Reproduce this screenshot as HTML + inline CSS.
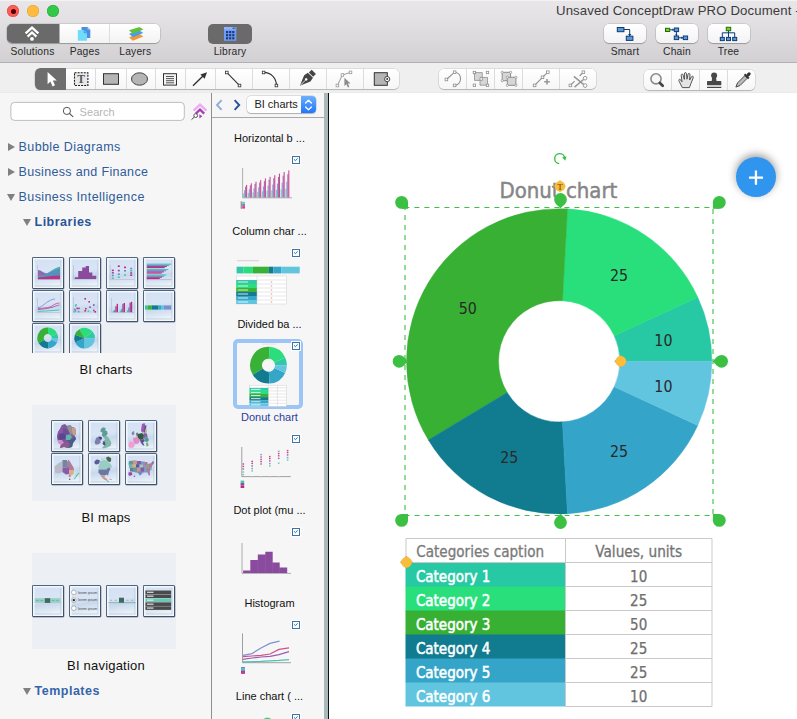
<!DOCTYPE html>
<html lang="en">
<head>
<meta charset="utf-8">
<title>Unsaved ConceptDraw PRO Document</title>
<style>
*{box-sizing:border-box;margin:0;padding:0}
html,body{width:797px;height:719px;overflow:hidden;background:#fff;font-family:"Liberation Sans",sans-serif;}
.abs{position:absolute}
#titlebar{position:absolute;left:0;top:0;width:797px;height:63px;background:linear-gradient(#e8e6e8 0%,#e3e1e3 30%,#d2d0d2 100%);border-bottom:1px solid #b2b0b2;box-shadow:inset 0 1px 0 #f4f3f4}
.tl{position:absolute;top:5px;width:12px;height:12px;border-radius:50%}
#win-title{position:absolute;left:556px;top:3px;font-size:13.2px;color:#3b3b3b;white-space:nowrap;letter-spacing:0.12px}
.tbtn{position:absolute;top:24.3px;height:19px;background:linear-gradient(#fff,#f3f3f3);border-radius:5px;box-shadow:0 0 0 0.5px rgba(0,0,0,.18),0 1px 1px rgba(0,0,0,.22)}
.tlabel{position:absolute;top:45.6px;font-size:10.3px;letter-spacing:.18px;color:#2a2a2a;text-align:center;white-space:nowrap;transform:translateX(-50%)}
#tools{position:absolute;left:0;top:63px;width:797px;height:30px;background:#efefef;border-bottom:1px solid #eaeaea}
.seg{position:absolute;top:5px;height:22px;background:linear-gradient(#fff,#f6f6f6);border-radius:5px;box-shadow:0 0 0 0.5px rgba(0,0,0,.16),0 1px 1px rgba(0,0,0,.18);overflow:hidden}
.seg i{position:absolute;top:0;width:1px;height:22px;background:#dcdcdc}
.seg svg{position:absolute;top:0;left:0}
#left{position:absolute;left:0;top:93px;width:211px;height:626px;background:#f6f6f6}
#leftborder{position:absolute;left:211px;top:93px;width:1px;height:626px;background:#8e8e8e}
#mid{position:absolute;left:212px;top:93px;width:112px;height:626px;background:#f6f6f6}
#split{position:absolute;left:324px;top:93px;width:4px;height:626px;background:#a9b8b8}
#splitline{position:absolute;left:328px;top:93px;width:1px;height:626px;background:#111}
#canvas{position:absolute;left:329px;top:93px;width:468px;height:626px;background:#fff;overflow:hidden}
.tree{position:absolute;font-size:12.5px;color:#2f5b99;white-space:nowrap;line-height:16px;letter-spacing:0.42px}
.tree.b{font-weight:bold;color:#2a559a;letter-spacing:0.5px}
.tri-r{position:absolute;width:0;height:0;border-left:7.5px solid #808080;border-top:4.7px solid transparent;border-bottom:4.7px solid transparent}
.tri-d{position:absolute;width:0;height:0;border-top:7.5px solid #808080;border-left:4.5px solid transparent;border-right:4.5px solid transparent}
.libbox{position:absolute;left:32px;width:144px;height:96px;background:#eceff4;overflow:hidden}
.liblabel{position:absolute;left:32px;width:148px;text-align:center;font-size:13px;color:#111;white-space:nowrap;line-height:16px;letter-spacing:0.2px}
.tile{position:absolute;width:32px;height:32px;border:1px solid #42546e;border-color:#52657f #3f516b #3f516b #52657f;border-radius:1.5px;background:linear-gradient(172deg,#d2e0f4 0%,#d9e5f5 42%,#c8d8ec 58%,#dde8f5 78%,#fbfdff 100%);box-shadow:inset 0 0 0 1.6px #f2f7fc,inset -2.4px -2.4px 0 0 rgba(120,140,170,.35),.4px .4px 0 rgba(66,84,110,.6);overflow:hidden}
.tile svg{position:absolute;left:-1px;top:-1px}
.mlabel{position:absolute;left:213px;width:113px;text-align:center;font-size:11px;color:#111;white-space:nowrap;line-height:14px;letter-spacing:0}
.chk{position:absolute;left:292px;width:8px;height:8px;border:1px solid #3f73a3;background:#fdfdfd;box-shadow:0 0 0 1px rgba(255,255,255,.9)}
.thumb{position:absolute}
.ctext{font-family:"DejaVu Sans Condensed","DejaVu Sans","Liberation Sans",sans-serif}
</style>
</head>
<body>
<div id="titlebar">
  <div class="tl" style="left:7px;background:#fc5b57;box-shadow:inset 0 0 0 .5px #df4744"></div>
  <div class="abs" style="left:10.5px;top:8.5px;width:5px;height:5px;border-radius:50%;background:#4c0102"></div>
  <div class="tl" style="left:27px;background:#fdbc40;box-shadow:inset 0 0 0 .5px #de9f34"></div>
  <div class="tl" style="left:47px;background:#34c84a;box-shadow:inset 0 0 0 .5px #27aa35"></div>

  <!-- segmented: Solutions / Pages / Layers -->
  <div class="tbtn" style="left:7px;width:153px;overflow:hidden">
    <div class="abs" style="left:0;top:0;width:52px;height:20px;background:#6a6a6a;box-shadow:0 0 0 .5px #6a6a6a"></div>
    <div class="abs" style="left:102px;top:0;width:1px;height:20px;background:#dedede"></div>
  </div>
  <div class="tbtn" style="left:208px;width:44px;background:#6a6a6a;box-shadow:none;top:24px;height:19.7px"></div>
  <div class="tbtn" style="left:604px;width:42px"></div>
  <div class="tbtn" style="left:656px;width:42px"></div>
  <div class="tbtn" style="left:708px;width:42px"></div>
  <svg class="abs" style="left:0;top:0" width="797" height="62" viewBox="0 0 797 62">
    <!-- solutions icon -->
    <g fill="none" stroke="#fff" stroke-width="2.2" stroke-linejoin="miter">
      <path d="M25.6 33.4 L32 27.6 L38.4 33.4"/>
      <path d="M27.6 36.6 L32 32.4 L36.4 36.6"/>
    </g>
    <circle cx="32" cy="38.9" r="1.9" fill="#fff"/>
    <!-- pages icon -->
    <path d="M81.5 27 H87.5 L90.3 29.8 V38 H81.5 Z" fill="#4a8fe0"/>
    <path d="M87.5 27 V29.8 H90.3 Z" fill="#9cc6f5"/>
    <path d="M77.8 30 H84.2 L87 32.8 V40.8 H77.8 Z" fill="#6fdcfb"/>
    <path d="M84.2 30 V32.8 H87" fill="none" stroke="#3f86d8" stroke-width="0.8"/>
    <!-- layers icon -->
    <path d="M129 37.2 L139.5 34 L143.3 36.4 L132.8 40.7 Z" fill="#f8952c"/>
    <path d="M129 33.8 L139.5 30.6 L143.3 33 L132.8 37.3 Z" fill="#4a9cf2"/>
    <path d="M129 30.2 L139.5 27 L143.3 29.6 L132.8 33.9 Z" fill="#62c13a"/>
    <!-- library icon -->
    <rect x="224" y="27" width="12.3" height="13.8" fill="#6f9cf6"/>
    <rect x="224" y="27" width="12.3" height="2.6" fill="#8fb4fb"/>
    <g fill="#1f3a77">
      <rect x="232.6" y="27.6" width="1.2" height="1.2"/><rect x="234.4" y="27.6" width="1.2" height="1.2"/>
      <rect x="226" y="31" width="2.2" height="2.2"/><rect x="229.1" y="31" width="2.2" height="2.2"/><rect x="232.2" y="31" width="2.2" height="2.2"/>
      <rect x="226" y="34.1" width="2.2" height="2.2"/><rect x="229.1" y="34.1" width="2.2" height="2.2"/><rect x="232.2" y="34.1" width="2.2" height="2.2"/>
      <rect x="226" y="37.2" width="2.2" height="2.2"/><rect x="229.1" y="37.2" width="2.2" height="2.2"/><rect x="232.2" y="37.2" width="2.2" height="2.2"/>
    </g>
    <!-- smart icon -->
    <g stroke="#0e3a78" stroke-width="1" fill="#5b9bd5">
      <path d="M624 29.5 H629.7 V36" fill="none"/>
      <rect x="617.3" y="27.5" width="6.6" height="4.2"/>
      <rect x="626.3" y="36.2" width="6.6" height="4.2"/>
    </g>
    <path d="M628 34 L629.7 36.2 L631.4 34 Z" fill="#0e3a78"/>
    <!-- chain icon -->
    <g stroke="#0e3a78" stroke-width="1" fill="#5b9bd5">
      <path d="M670 29.8 H674 M676.4 31.5 V36 M679 37.8 H683" fill="none"/>
      <rect x="665.5" y="28.3" width="4.2" height="3.2" fill="#79d321" stroke="#1e6b0f"/>
      <rect x="674.3" y="28.0" width="4.3" height="3.6"/>
      <rect x="674.3" y="36.0" width="4.3" height="3.6"/>
      <rect x="683.3" y="36.0" width="4.3" height="3.6"/>
    </g>
    <path d="M672.4 28.6 L674.2 29.8 L672.4 31 Z M675.2 34.3 L676.4 36 L677.6 34.3 Z M681.4 36.6 L683.2 37.8 L681.4 39 Z" fill="#0e3a78"/>
    <!-- tree icon -->
    <g stroke="#0e3a78" stroke-width="1" fill="#5b9bd5">
      <path d="M728.5 31 V37 M722.3 37 V32.8 H734.7 V37" fill="none"/>
      <rect x="726.3" y="27.3" width="4.4" height="3.4" fill="#79d321" stroke="#1e6b0f"/>
      <rect x="720.3" y="37.4" width="4" height="3.2"/>
      <rect x="726.5" y="37.4" width="4" height="3.2"/>
      <rect x="732.7" y="37.4" width="4" height="3.2"/>
    </g>
  </svg>
  <div class="tlabel" style="left:32.5px">Solutions</div>
  <div class="tlabel" style="left:84.7px">Pages</div>
  <div class="tlabel" style="left:135.3px">Layers</div>
  <div class="tlabel" style="left:230px">Library</div>
  <div class="tlabel" style="left:625px">Smart</div>
  <div class="tlabel" style="left:677px">Chain</div>
  <div class="tlabel" style="left:728.5px">Tree</div>
  <div id="win-title">Unsaved ConceptDraw PRO Document - Page1</div>
</div>
<div id="tools">
  <div class="seg" style="left:35px;width:364px;top:6px;height:20px">
    <i style="left:60px"></i><i style="left:90.5px"></i><i style="left:119.5px"></i><i style="left:149.5px"></i><i style="left:179.5px"></i><i style="left:216.5px"></i><i style="left:253.5px"></i><i style="left:290.5px"></i><i style="left:327.5px"></i></div>
  <div class="seg" style="left:438.7px;width:157.7px;top:6px;height:20px"><i style="left:27.3px"></i><i style="left:55.3px"></i><i style="left:83.2px"></i><i style="left:120.2px"></i></div>
  <div class="seg" style="left:643.8px;width:111.4px;top:7px;height:20px"><i style="left:27.5px"></i><i style="left:55.5px"></i><i style="left:83.5px"></i></div>
  <div class="abs" style="left:35px;top:5px;width:31px;height:22px;background:#6e6e6e;border-radius:5.5px 0 0 5.5px"></div>
  <svg class="abs" style="left:0;top:-63px" width="797" height="93" viewBox="0 0 797 93">
    <!-- pointer -->
    <path d="M47.6 72 V84.2 L50.4 81.6 L52.6 86.4 L55 85.3 L52.8 80.6 L56.8 80.4 Z" fill="#fff"/>
    <!-- text tool -->
    <rect x="74.5" y="72.7" width="13.4" height="12.8" fill="#e8e8e8" stroke="#1a1a1a" stroke-width="1.1" stroke-dasharray="2 1.1"/>
    <text x="81.1" y="83.2" text-anchor="middle" font-family="Liberation Serif,serif" font-weight="bold" font-size="11.5" fill="#555">T</text>
    <!-- rect -->
    <rect x="103.5" y="73.7" width="15" height="10.6" fill="#b5b5b5" stroke="#333" stroke-width="1"/>
    <!-- ellipse -->
    <ellipse cx="139.5" cy="79" rx="8" ry="6.2" fill="#b5b5b5" stroke="#444" stroke-width="1"/>
    <!-- text box -->
    <rect x="163.5" y="73.7" width="13" height="11.4" fill="#f2f2f2" stroke="#333" stroke-width="1"/>
    <path d="M166 76.5 H174 M166 78.6 H174 M166 80.7 H174 M166 82.8 H174" stroke="#444" stroke-width="0.9"/>
    <!-- arrow -->
    <path d="M193 85.8 L204 75" stroke="#333" stroke-width="1.4" fill="none"/>
    <path d="M207 72.2 L200.4 74.6 L204.6 78.8 Z" fill="#333"/>
    <!-- line -->
    <path d="M226.7 72.4 L239.4 85.4" stroke="#333" stroke-width="1.1"/>
    <rect x="225.5" y="71.2" width="2.6" height="2.6" fill="#fff" stroke="#333" stroke-width=".8"/>
    <rect x="238.2" y="84.2" width="2.6" height="2.6" fill="#fff" stroke="#333" stroke-width=".8"/>
    <!-- arc -->
    <path d="M263.6 72.4 C271 72.4 276.4 78 276.4 85.4" stroke="#333" stroke-width="1.1" fill="none"/>
    <rect x="262.3" y="71.2" width="2.6" height="2.6" fill="#fff" stroke="#333" stroke-width=".8"/>
    <rect x="275.1" y="84.2" width="2.6" height="2.6" fill="#fff" stroke="#333" stroke-width=".8"/>
    <!-- pen -->
    <g transform="translate(306.6 79) rotate(45)">
      <rect x="-3" y="-10.2" width="6" height="4" fill="#444"/>
      <path d="M-3.6 -5.4 H3.6 L4.4 -1 L0 9.6 L-4.4 -1 Z" fill="#444"/>
      <path d="M0 9 V1.6" stroke="#fff" stroke-width=".8"/><circle cx="0" cy="0.6" r="1.3" fill="#fff"/>
    </g>
    <!-- point edit -->
    <path d="M337.4 85.4 L342.4 75 L350.5 72.4" stroke="#9a9a9a" stroke-width="1" fill="none"/>
    <g fill="#fff" stroke="#9a9a9a" stroke-width=".8"><rect x="336.1" y="84.2" width="2.6" height="2.6"/><rect x="341.1" y="73.7" width="2.6" height="2.6"/><rect x="349.2" y="71.1" width="2.6" height="2.6"/></g>
    <path d="M344.4 77.8 V86 L346.4 84.2 L347.9 87.4 L349.4 86.7 L347.9 83.5 L350.6 83.4 Z" fill="#8c8c8c"/>
    <!-- shape dot -->
    <rect x="374.3" y="72.7" width="13" height="12.6" fill="#b5b5b5" stroke="#333" stroke-width="1"/>
    <circle cx="387.2" cy="79.1" r="2.6" fill="#fff" stroke="#333" stroke-width=".9"/><circle cx="387.2" cy="79.1" r="1" fill="#333"/>
    <!-- group2: lasso -->
    <g fill="none" stroke="#8e8e8e" stroke-width="1.1">
      <path d="M446.4 79.5 L454.6 72.2 C462.5 72.8 462.5 84.8 454.6 85.4"/>
      <g fill="#fff" stroke-width=".8"><rect x="445.1" y="78.2" width="2.6" height="2.6"/><rect x="453.3" y="70.9" width="2.6" height="2.6"/><rect x="453.3" y="84.1" width="2.6" height="2.6"/></g>
    </g>
    <!-- group2: two squares cut -->
    <g stroke="#8e8e8e" stroke-width=".8" fill="#d6d6d6">
      <path d="M474.5 72.6 H482.3 V77.4 H480 V80.4 H474.5 Z"/>
      <path d="M482.3 77.4 H487.5 V85.2 H480 V80.4 H482.3 Z"/>
      <g fill="#fff" stroke-width=".8"><rect x="473.2" y="71.3" width="2.4" height="2.4"/><rect x="486.3" y="71.3" width="2.4" height="2.4"/><rect x="473.2" y="84.1" width="2.4" height="2.4"/><rect x="486.3" y="84.1" width="2.4" height="2.4"/></g>
    </g>
    <!-- group2: two squares overlap -->
    <g stroke="#8e8e8e" stroke-width="1" fill="#d6d6d6">
      <rect x="502.2" y="72.3" width="8.4" height="8.4"/>
      <rect x="507.3" y="77.3" width="8.6" height="8"/>
      <g fill="#fff" stroke-width=".7"><circle cx="502.2" cy="72.3" r="1.1"/><circle cx="510.6" cy="72.3" r="1.1"/><circle cx="502.2" cy="80.7" r="1.1"/><circle cx="507.3" cy="77.3" r="1.1"/><circle cx="515.9" cy="77.3" r="1.1"/><circle cx="507.3" cy="85.3" r="1.1"/><circle cx="515.9" cy="85.3" r="1.1"/></g>
    </g>
    <!-- group2: line plus -->
    <g fill="none" stroke="#8e8e8e" stroke-width="1.1">
      <path d="M534.6 85.4 L542.5 77.3 L547.8 72.2"/>
      <g fill="#fff" stroke-width=".8"><rect x="533.3" y="84.1" width="2.6" height="2.6"/><rect x="541.2" y="76" width="2.6" height="2.6"/><rect x="546.5" y="70.9" width="2.6" height="2.6"/></g>
      <path d="M544.2 81.8 H549.8 M547 79 V84.6" stroke-width="1.6" stroke="#979797"/>
    </g>
    <!-- group2: scissors -->
    <g fill="none" stroke="#8e8e8e" stroke-width="1.1">
      <path d="M570.4 85.4 L574.6 81.2 M579.6 76 L583.4 72.2"/>
      <g fill="#fff" stroke-width=".8"><rect x="569.1" y="84.1" width="2.6" height="2.6"/><rect x="582.1" y="70.9" width="2.6" height="2.6"/></g>
      <path d="M573.9 76.4 L583.8 84.6 M574.5 87.1 L583.8 79.2" stroke-width="1.5" stroke="#979797"/>
      <circle cx="585.1" cy="78.2" r="1.8" fill="#fff" stroke-width=".9"/><circle cx="585.1" cy="85.6" r="1.8" fill="#fff" stroke-width=".9"/>
    </g>
    <!-- group3: magnifier -->
    <circle cx="656" cy="78.800" r="5.1" fill="#f8f8f8" stroke="#8a8a8a" stroke-width="1.6"/>
    <path d="M659.9 83 L662.7 85.8" stroke="#444" stroke-width="2.7" stroke-linecap="round"/>
    <!-- group3: hand -->
    <path d="M682.3 87.6 L679.2 81.4 C678 79.6 679.6 78.6 680.8 80 L682 81.8 L681.2 75.4 C681 73.8 682.8 73.6 683.2 75.2 L684.4 79.4 L684.4 73.8 C684.4 72.2 686.4 72.2 686.5 73.8 L687 79.2 L688 74.4 C688.3 72.9 690.2 73.3 690 74.8 L689.6 80 L691.4 76.8 C692.2 75.5 693.8 76.3 693.2 77.8 L691 83.4 L689.4 87.6 Z" fill="#e4e4e4" stroke="#444" stroke-width=".9" stroke-linejoin="round"/>
    <!-- group3: stamp -->
    <g fill="#484848">
      <circle cx="714.1" cy="75.4" r="3"/>
      <path d="M712.3 76 H715.9 L716.5 81 H711.7 Z"/>
      <path d="M707.6 81 H720.6 Q721.3 81 721.3 81.8 V85.2 H707 V81.8 Q707 81 707.6 81 Z"/>
      <rect x="707" y="86.8" width="14.3" height="1.1" fill="#333"/>
    </g>
    <!-- group3: eyedropper -->
    <g transform="translate(742 81) rotate(45)">
      <rect x="-1.6" y="-11.6" width="3.2" height="4.4" rx="1.5" fill="#333"/>
      <rect x="-3" y="-7.6" width="6" height="2" fill="#333"/>
      <path d="M-1.8 -5.6 H1.8 V4.6 L0 8.6 L-1.8 4.6 Z" fill="#bbb" stroke="#444" stroke-width=".9"/>
    </g>
  </svg>
</div>
<div class="abs" style="left:0;top:93px;width:211px;height:626px;background:#f6f6f6"></div>
<div id="left" style="top:0;height:719px;background:none">
    <svg class="abs" style="left:0;top:93px" width="212" height="40" viewBox="0 93 212 40">
    <rect x="10.9" y="102.4" width="173.4" height="18" rx="3.6" fill="#fff" stroke="#bdbdbd" stroke-width="1"/>
    <circle cx="66.9" cy="110.9" r="3.6" fill="none" stroke="#555" stroke-width="1"/>
    <path d="M69.5 113.5 L72.9 116.6" stroke="#555" stroke-width="1.1" stroke-linecap="round"/>
    <path d="M193.6 110.6 L200 104.6 L206.4 110.6" fill="none" stroke="#f3a6f7" stroke-width="2.2"/>
    <path d="M195.8 113.6 L200 109.6 L204.2 113.6" fill="none" stroke="#a23fb4" stroke-width="2.2"/>
    <path d="M199.4 114.2 L202.4 116.3 L199.4 118.4 Z" fill="#a23fb4"/>
    <circle cx="195.7" cy="115.6" r="1.9" fill="#fff" stroke="#444" stroke-width=".9"/>
    <path d="M194.3 117 L191.5 119.7" stroke="#444" stroke-width="1"/>
  </svg>
  <div class="abs" style="left:79.6px;top:106px;font-size:11px;color:#b6b6b6;line-height:13px;letter-spacing:.05px">Search</div>

  <div class="tri-r" style="left:8px;top:142.8px"></div><div class="tree" style="left:18.5px;top:138.5px">Bubble Diagrams</div>
  <div class="tri-r" style="left:8px;top:167.8px"></div><div class="tree" style="left:18.5px;top:163.5px;letter-spacing:.34px">Business and Finance</div>
  <div class="tri-d" style="left:7.3px;top:194px"></div><div class="tree" style="left:18.5px;top:188.5px">Business Intelligence</div>
  <div class="tri-d" style="left:23px;top:219px"></div><div class="tree b" style="left:34.5px;top:213.5px">Libraries</div>

  <div class="libbox" id="lb1" style="top:257px">
    <div class="tile" style="left:0px;top:0px;"><svg width="32" height="32" viewBox="0 0 32 32"><path d="M5.5 8 V22.5 H28" fill="none" stroke="#b9bfc9" stroke-width=".7"/><path d="M6 13 C9 13 12 16.5 15 16.5 C19 15 23 11 28 10 V22 H6 Z" fill="#8b4fa3" opacity=".85"/>
<path d="M15 16.5 C19 14 23 10.5 28 9.5 V22 H6 V19 C9 18.5 12 18 15 16.5 Z" fill="#3fbfa8" opacity=".85"/>
<path d="M6 20 C12 18.5 22 13 28 11.5 V22 H6 Z" fill="#5d86c2" opacity=".8"/>
<path d="M6 20.5 C14 19.5 22 18.8 28 18.4 V22.3 H6 Z" fill="#c4267e" opacity=".85"/></svg></div>
    <div class="tile" style="left:37px;top:0px;"><svg width="32" height="32" viewBox="0 0 32 32"><path d="M4.5 8 V22.3 H27" fill="none" stroke="#b9bfc9" stroke-width=".7"/><path d="M5.7 22 V20.2 H9.2 V14 H13.2 V10.6 H16.7 V9 H20 V15.6 H23.3 V18.8 H27.3 V22 Z" fill="#8a4a9e"/></svg></div>
    <div class="tile" style="left:74px;top:0px;"><svg width="32" height="32" viewBox="0 0 32 32"><path d="M4.200 8 V22.5 H28" fill="none" stroke="#b9bfc9" stroke-width=".7"/><rect x="5.8" y="12.6" width="2" height="1.6" fill="#c4267e"/><rect x="5.8" y="15" width="2" height="1.6" fill="#8b4fa3"/><rect x="5.8" y="17.6" width="2" height="1.6" fill="#6f87c8"/><rect x="5.8" y="20.4" width="2" height="1.6" fill="#45c7b0"/><rect x="11.8" y="8.4" width="2" height="1.6" fill="#c4267e"/><rect x="11.8" y="12.8" width="2" height="1.6" fill="#8b4fa3"/><rect x="11.8" y="16.4" width="2" height="1.6" fill="#6f87c8"/><rect x="11.8" y="19.4" width="2" height="1.6" fill="#45c7b0"/><rect x="18" y="9.6" width="2" height="1.6" fill="#c4267e"/><rect x="18" y="13" width="2" height="1.6" fill="#6f87c8"/><rect x="18" y="17.2" width="2" height="1.6" fill="#45c7b0"/><rect x="24.2" y="10.8" width="2" height="1.6" fill="#6f87c8"/><rect x="24.2" y="13" width="2" height="1.6" fill="#45c7b0"/><rect x="24.2" y="15.2" width="2" height="1.6" fill="#8b4fa3"/><rect x="24.2" y="17.4" width="2" height="1.6" fill="#c4267e"/></svg></div>
    <div class="tile" style="left:111px;top:0px;"><svg width="32" height="32" viewBox="0 0 32 32"><path d="M3.5 22.6 H28.5" stroke="#9aa3af" stroke-width=".6"/><rect x="3.8" y="6.60" width="24.5" height="1.15" fill="#45c7b0"/><rect x="3.8" y="7.75" width="22.3" height="1.15" fill="#6f87c8"/><rect x="3.8" y="8.90" width="20.1" height="1.15" fill="#8b4fa3"/><rect x="3.8" y="10.05" width="17.9" height="1.15" fill="#c4267e"/><rect x="3.8" y="12.00" width="21.5" height="1.15" fill="#45c7b0"/><rect x="3.8" y="13.15" width="19.3" height="1.15" fill="#6f87c8"/><rect x="3.8" y="14.30" width="17.1" height="1.15" fill="#8b4fa3"/><rect x="3.8" y="15.45" width="14.9" height="1.15" fill="#c4267e"/><rect x="3.8" y="17.40" width="19.5" height="1.15" fill="#45c7b0"/><rect x="3.8" y="18.55" width="17.3" height="1.15" fill="#6f87c8"/><rect x="3.8" y="19.70" width="15.1" height="1.15" fill="#8b4fa3"/><rect x="3.8" y="20.85" width="12.9" height="1.15" fill="#c4267e"/></svg></div>
    <div class="tile" style="left:0px;top:33.3px;"><svg width="32" height="32" viewBox="0 0 32 32"><path d="M5.5 8 V22.5 H28" fill="none" stroke="#b9bfc9" stroke-width=".7"/><path d="M6 17.6 C9 17.6 12 14 16 11.6 S21 9.4 23 9" fill="none" stroke="#7f92cf" stroke-width=".9"/>
<path d="M6 18.6 C11 18 15 18 18 17 S22 13.5 27.5 13" fill="none" stroke="#d0508f" stroke-width=".9"/>
<path d="M6 19.6 C11 19 15 18.6 19 17.6 S24 15.6 27.5 15" fill="none" stroke="#9a5db0" stroke-width=".9"/>
<path d="M6 21.4 C12 21.2 20 20.6 27.5 20" fill="none" stroke="#49c4b0" stroke-width="1"/></svg></div>
    <div class="tile" style="left:37px;top:33.3px;"><svg width="32" height="32" viewBox="0 0 32 32"><path d="M4.5 7 V22 H28" fill="none" stroke="#b9bfc9" stroke-width=".7"/><rect x="15.4" y="8" width="1.6" height="1.6" fill="#c4267e"/><rect x="19.4" y="11" width="1.6" height="1.6" fill="#c4267e"/><rect x="24" y="14.2" width="1.6" height="1.6" fill="#8b4fa3"/><rect x="20.2" y="16.4" width="1.6" height="1.6" fill="#8b4fa3"/><rect x="16" y="18" width="1.6" height="1.6" fill="#c4267e"/><rect x="15.4" y="20" width="1.6" height="1.6" fill="#c4267e"/><rect x="7.4" y="17.6" width="1.6" height="1.6" fill="#c4267e"/><rect x="9.2" y="17.6" width="1.6" height="1.6" fill="#8b4fa3"/><rect x="5.8" y="15" width="1.6" height="1.6" fill="#45c7b0"/><rect x="6.4" y="14" width="1.6" height="1.6" fill="#45c7b0"/><rect x="5" y="18.6" width="1.6" height="1.6" fill="#6f87c8"/><rect x="5.6" y="20" width="1.6" height="1.6" fill="#6f87c8"/><rect x="8.8" y="20.8" width="1.6" height="1.6" fill="#6f87c8"/><rect x="4.6" y="21" width="1.6" height="1.6" fill="#45c7b0"/><rect x="18.6" y="20.4" width="1.6" height="1.6" fill="#45c7b0"/><rect x="24" y="19.6" width="1.6" height="1.6" fill="#8b4fa3"/><rect x="25.4" y="21" width="1.6" height="1.6" fill="#c4267e"/></svg></div>
    <div class="tile" style="left:74px;top:33.3px;"><svg width="32" height="32" viewBox="0 0 32 32"><path d="M5.5 8 V22.5 H28" fill="none" stroke="#b9bfc9" stroke-width=".7"/><rect x="6.60" y="21.00" width="1.35" height="1.2" fill="#45c7b0"/><rect x="7.95" y="20.00" width="1.35" height="2.2" fill="#6f87c8"/><rect x="9.30" y="16.20" width="1.35" height="6" fill="#8b4fa3"/><rect x="10.65" y="13.80" width="1.35" height="8.4" fill="#c4267e"/><rect x="13.60" y="20.80" width="1.35" height="1.4" fill="#45c7b0"/><rect x="14.95" y="19.20" width="1.35" height="3" fill="#6f87c8"/><rect x="16.30" y="13.80" width="1.35" height="8.4" fill="#8b4fa3"/><rect x="17.65" y="13.00" width="1.35" height="9.2" fill="#c4267e"/><rect x="20.80" y="20.20" width="1.35" height="2" fill="#45c7b0"/><rect x="22.15" y="17.60" width="1.35" height="4.6" fill="#6f87c8"/><rect x="23.50" y="12.60" width="1.35" height="9.6" fill="#8b4fa3"/><rect x="24.85" y="11.80" width="1.35" height="10.4" fill="#c4267e"/></svg></div>
    <div class="tile" style="left:111px;top:33.3px;"><svg width="32" height="32" viewBox="0 0 32 32"><rect x="2" y="15.4" width="2.6" height="4.2" fill="#2fc9a4"/><rect x="4.6" y="15.4" width="4.2" height="4.2" fill="#39b036"/><rect x="8.8" y="15.4" width="6.6" height="4.2" fill="#127b90"/><rect x="15.4" y="15.4" width="2.6" height="4.2" fill="#35a5c8"/><rect x="18" y="15.4" width="3" height="4.2" fill="#62c5e0"/><rect x="21" y="15.4" width="7.2" height="4.2" fill="#7d90cd"/></svg></div>
    <div class="tile" style="left:0px;top:66.3px;"><svg width="32" height="32" viewBox="0 0 32 32"><path d="M26.10 15.00 A10.4 10.4 0 0 0 25.14 10.63 L19.33 13.32 A4 4 0 0 1 19.70 15.00 Z" fill="#2fc9a4"/><path d="M25.14 10.63 A10.4 10.4 0 0 0 16.26 4.62 L15.92 11.01 A4 4 0 0 1 19.33 13.32 Z" fill="#2bdd7c"/><path d="M16.26 4.62 A10.4 10.4 0 0 0 6.79 20.36 L12.27 17.06 A4 4 0 0 1 15.92 11.01 Z" fill="#39b036"/><path d="M6.79 20.36 A10.4 10.4 0 0 0 16.26 25.38 L15.92 18.99 A4 4 0 0 1 12.27 17.06 Z" fill="#127b90"/><path d="M16.26 25.38 A10.4 10.4 0 0 0 25.14 19.37 L19.33 16.68 A4 4 0 0 1 15.92 18.99 Z" fill="#35a5c8"/><path d="M25.14 19.37 A10.4 10.4 0 0 0 26.10 15.00 L19.70 15.00 A4 4 0 0 1 19.33 16.68 Z" fill="#62c5e0"/></svg></div>
    <div class="tile" style="left:37px;top:66.3px;"><svg width="32" height="32" viewBox="0 0 32 32"><path d="M15.6 15.2 L26.00 15.20 A10.4 10.4 0 0 0 23.57 8.52 Z" fill="#2fc9a4"/><path d="M15.6 15.2 L23.57 8.52 A10.4 10.4 0 0 0 10.40 6.19 Z" fill="#2bdd7c"/><path d="M15.6 15.2 L10.40 6.19 A10.4 10.4 0 0 0 5.83 11.64 Z" fill="#39b036"/><path d="M15.6 15.2 L5.83 11.64 A10.4 10.4 0 0 0 6.17 19.60 Z" fill="#127b90"/><path d="M15.6 15.2 L6.17 19.60 A10.4 10.4 0 0 0 15.60 25.60 Z" fill="#35a5c8"/><path d="M15.6 15.2 L15.60 25.60 A10.4 10.4 0 0 0 26.00 15.20 Z" fill="#62c5e0"/></svg></div>
  </div>
  <div class="liblabel" style="top:361.5px">BI charts</div>
  <div class="libbox" id="lb2" style="top:405px">
    <div class="tile" style="left:19.2px;top:15px"><svg width="32" height="32" viewBox="0 0 32 32"><path d="M11 5 L14 4 L16 6 L19 5 L21 7 L24 8 L25 12 L24 16 L25 19 L22 23 L21 27 L17 28 L13 27 L9 28 L10 24 L7 22 L6 17 L7 12 L9 9 Z" fill="#7a5a9a"/>
<path d="M16 6 L19 5 L21 7 L24 8 L25 12 L23 15 L19 14 L17 10 Z" fill="#9a8e92"/>
<path d="M21 8 L24 8 L25 12 L24 16 L22 15 L21 11 Z" fill="#c4a08c"/>
<path d="M7 12 L9 9 L11 5 L13 8 L12 13 L10 17 L6 17 Z" fill="#8a58a6"/>
<path d="M8 14 L12 13 L15 15 L14 19 L10 20 L7 19 Z" fill="#5a4590"/>
<path d="M15 15 L19 14 L21 17 L19 20 L15 20 Z" fill="#5fb4b0"/>
<path d="M7 20 L11 20 L13 23 L10 25 L7 23 Z" fill="#d48cc8"/>
<path d="M13 23 L17 21 L19 25 L17 28 L13 27 L9 28 L10 25 Z" fill="#8a5a90"/>
<path d="M15 20 L19 20 L24 17 L25 19 L22 23 L21 27 L17 28 L19 25 L17 21 Z" fill="#4a5f88"/>
<path d="M12 8 L17 10 L19 14 L15 15 L12 13 Z" fill="#6e4f96"/></svg></div>
    <div class="tile" style="left:56.2px;top:15px"><svg width="32" height="32" viewBox="0 0 32 32"><path d="M13 9 L15 7.5 L17.5 8 L17 10.5 L19 11 L19.5 14 L18 15.5 L20 17 L22 20 L23.5 23 L22.5 26 L19 27.5 L15.5 28.5 L14 27.5 L16.5 25.5 L14.5 24 L15.5 21 L17 19.5 L15.5 17 L14 15.5 L14.5 12.5 L12.5 11.5 Z" fill="#7fb8a8"/>
<path d="M13 9 L15 7.5 L17.5 8 L17 10.5 L19 11 L19.5 14 L18 15.5 L15.5 17 L14 15.5 L14.5 12.5 L12.5 11.5 Z" fill="#5f9c98"/>
<path d="M14.5 24 L15.5 21 L17 22 L17.5 25 L16.5 25.5 Z" fill="#5a4a88"/>
<path d="M8 18 L11 16.5 L13.5 17 L14 19 L12.5 20 L12.5 23 L10 24.5 L7.5 24.5 L6.5 22 L7.5 20 Z" fill="#7a80aa"/>
<path d="M10.5 16.8 L13.5 17 L14 19 L12 19.4 Z" fill="#4a3a80"/></svg></div>
    <div class="tile" style="left:93.2px;top:15px"><svg width="32" height="32" viewBox="0 0 32 32"><path d="M17 4 L19.5 3 L20.5 6 L19.5 10 L18 13 L16 11 L16.5 7 Z" fill="#9a5ab4"/>
<path d="M19.5 6 L21.5 5 L21 10 L19.5 13 L18.5 12 Z" fill="#7a4a9c"/>
<path d="M7 12 L9 11 L9.5 14 L8 15.5 L6.5 14 Z" fill="#8a86a0"/>
<path d="M11 13 L13 12.5 L13.5 16 L11.5 16.5 Z" fill="#6a7a8a"/>
<path d="M13 14 L17 13 L19 15 L18.5 19 L15 20 L12.5 18 Z" fill="#2f5a40"/>
<path d="M18.5 13 L22 13.5 L22.5 17 L19 18 Z" fill="#8a5aa4"/>
<path d="M8 18 L12.5 17 L15 20 L13.5 23.5 L10 24 L8.5 22 Z" fill="#e08ac8"/>
<path d="M3.5 24 L5 21 L9 22.5 L10 24 L8.5 27.5 L5 28 L3.5 26.5 Z" fill="#f0a0d0"/>
<path d="M15 20 L18.5 19 L20 21 L18 22.5 L19.5 26 L17.5 25 L15.5 22 Z" fill="#6a4a98"/>
<path d="M19 18 L22.5 17 L24 20 L22 22.5 L20 21 Z" fill="#4f9a98"/>
<path d="M21 23 L23 22.5 L23.5 26 L21.5 26.5 Z" fill="#7aa870"/>
<path d="M20 9.5 L21.5 9 L22 12.5 L20 13 Z" fill="#a0c070"/></svg></div>
    <div class="tile" style="left:19.2px;top:48.4px"><svg width="32" height="32" viewBox="0 0 32 32"><path d="M3.5 13.5 L7 10.5 L11.5 8 L11.5 19 L7 20.5 L4 19.5 Z" fill="#b9bcc8"/>
<path d="M11.5 7 L16 7 L16 14.5 L11.5 14.5 Z" fill="#6a8aa0"/>
<path d="M16 9 L17.5 6.5 L19.5 9.5 L22.5 14.5 L23 17 L16 17 Z" fill="#b07a9c"/>
<path d="M11.5 14.5 L18 14.5 L18 21 L15 21.5 L11.5 19 Z" fill="#8a5aa8"/>
<path d="M18 17 L23 17 L22.5 21 L20 22.5 L18 21.5 Z" fill="#d8b088"/>
<path d="M18 21.5 L20 22.5 L19.5 24 L17.5 23.5 Z" fill="#d070a8"/>
<circle cx="18.8" cy="26.3" r=".7" fill="#444"/>
<path d="M22 27 L29 12.5" stroke="#c8ccd4" stroke-width=".5"/>
<path d="M24 23.5 L27.5 19.5 L28.5 20 L25.5 24 Z M23 25.5 L24.5 24 L25 25 L23.5 26.5 Z" fill="#58c8a8"/></svg></div>
    <div class="tile" style="left:56.2px;top:48.4px"><svg width="32" height="32" viewBox="0 0 32 32"><path d="M18 4.5 L20.5 3.4 L23.2 5.2 L23 8.6 L21 9 L19 7.4 Z" fill="#3f6a50"/>
<path d="M6.4 8.4 L8.6 6.4 L11.6 7 L12 9 L10.4 11 L8 11.4 L6.6 10.4 Z" fill="#5a5a98"/>
<path d="M11.6 7.4 L14 8 L15.4 6.4 L17.6 7.6 L19.6 7.6 L20.4 9.6 L22.6 10.4 L24 13.6 L22.6 16 L21.4 14.4 L19.6 15 L18.6 16.6 L10.6 16.6 L10.4 13 L11.6 10.6 Z" fill="#9accc4"/>
<path d="M13 5.6 L15 5 L15.6 6.2 L13.6 7 Z M16.4 5 L18 5.4 L17.6 6.6 L16.2 6.2 Z" fill="#a8d4cc"/>
<path d="M10.6 16.6 L18.6 16.6 L19.6 15 L21.4 14.6 L22.4 16.4 L21 18.6 L20.4 21 L19.8 22.8 L18.8 21.4 L16.6 22.4 L14.6 22.6 L12 21.6 L10.4 19.4 Z" fill="#6a78a4"/>
<path d="M12 21.600 L14.6 22.6 L16.6 22.4 L16.8 24.6 L18.4 25.6 L19.6 27 L18.6 27.800 L16 26.6 L14 24.6 L12.6 22.8 Z" fill="#c89a8c"/>
<path d="M19.4 27 L21 28.4 L20.6 29.4 L18.8 28 Z" fill="#58c8a8"/>
<path d="M21.4 25.6 L24 26.2 L23.8 27 L21.4 26.600 Z" fill="#e088c8"/></svg></div>
    <div class="tile" style="left:93.2px;top:48.4px"><svg width="32" height="32" viewBox="0 0 32 32"><path d="M4 8 L9 7.5 L16 8.5 L21 9 L23 11 L26 10 L28 8 L29 9.5 L27 13 L26 16 L24.500 19 L25 22 L24 22.5 L22.5 19.5 L19 19.5 L17 20.5 L15 22.500 L13.500 20 L10.500 19.5 L7 18.500 L4.500 15 L3.500 11 Z" fill="#8a9ab8"/><rect x="4" y="8" width="4" height="3.5" fill="#5f9c98"/><rect x="8" y="7.6" width="4" height="3.5" fill="#c89a8c"/><rect x="12" y="8" width="4" height="3.4" fill="#8a5aa8"/><rect x="16" y="8.6" width="3.5" height="3" fill="#7a9ac8"/><rect x="19.5" y="9" width="3" height="3" fill="#b07a9c"/><rect x="4" y="11.5" width="3.5" height="3.5" fill="#6ab8a8"/><rect x="7.5" y="11.1" width="3.5" height="3.5" fill="#d8b088"/><rect x="11" y="11.4" width="3.5" height="3.2" fill="#5a5a98"/><rect x="14.5" y="11.6" width="3.5" height="3" fill="#9accc4"/><rect x="18" y="12" width="3" height="3" fill="#a08ab8"/><rect x="21" y="11.5" width="3" height="3.2" fill="#88a878"/><rect x="24" y="11" width="3" height="3.5" fill="#c070a8"/><rect x="5" y="15" width="3.5" height="3.5" fill="#6a78a4"/><rect x="8.5" y="14.6" width="3.5" height="4" fill="#5f9c98"/><rect x="12" y="14.6" width="3.5" height="4" fill="#c89a8c"/><rect x="15.5" y="14.6" width="3.5" height="4" fill="#8a5aa8"/><rect x="19" y="15" width="3" height="4" fill="#7a9ac8"/><rect x="22" y="14.7" width="3" height="4" fill="#b07a9c"/><rect x="25" y="14" width="1.6" height="3" fill="#6ab8a8"/><path d="M12.5 18.6 L16 18.6 L17 20.5 L15 22.6 L13.4 20.2 Z" fill="#6a8ac8"/><path d="M22.6 18.6 L24.6 19 L25 22 L24 22.5 Z" fill="#c070a8"/><path d="M26.5 10 L28 8 L29 9.5 L27.5 12 Z" fill="#b060a8"/><path d="M3.5 19.5 L6.5 19 L7.5 21.500 L5 23 L3.500 22 Z" fill="#9a4aa4"/><path d="M8.5 23 L10 22.6 L10.4 23.6 L9 24 Z" fill="#9a4aa4"/></svg></div>
  </div>
  <div class="liblabel" style="top:509.5px">BI maps</div>
  <div class="libbox" id="lb3" style="top:553px">
    <div class="tile" style="left:0px;top:32px"><svg width="32" height="32" viewBox="0 0 32 32"><rect x="2.7" y="13.2" width="25.7" height="4.7" fill="#9ad0c4"/><rect x="12.8" y="13.2" width="5.4" height="4.700" fill="#3f6a60"/><rect x="4.4" y="15.2" width="2.2" height=".8" fill="#6aa89c"/><rect x="8.6" y="15.2" width="2.2" height=".8" fill="#6aa89c"/><rect x="20.2" y="15.2" width="2.2" height=".8" fill="#6aa89c"/><rect x="24.4" y="15.2" width="2.2" height=".8" fill="#6aa89c"/></svg></div>
    <div class="tile" style="left:37px;top:32px"><svg width="32" height="32" viewBox="0 0 32 32"><circle cx="4.800" cy="7.4" r="2.3" fill="#fff" stroke="#8a8a8a" stroke-width=".6"/><text x="9" y="8.7" font-family="Liberation Sans, sans-serif" font-size="3.5" fill="#444">lorem ipsum</text><circle cx="4.800" cy="15.1" r="2.3" fill="#fff" stroke="#8a8a8a" stroke-width=".6"/><text x="9" y="16.4" font-family="Liberation Sans, sans-serif" font-size="3.5" fill="#444">lorem ipsum</text><circle cx="4.800" cy="23.2" r="2.3" fill="#fff" stroke="#8a8a8a" stroke-width=".6"/><text x="9" y="24.5" font-family="Liberation Sans, sans-serif" font-size="3.5" fill="#444">lorem ipsum</text><circle cx="4.800" cy="15.1" r="1.2" fill="#222"/></svg></div>
    <div class="tile" style="left:74px;top:32px"><svg width="32" height="32" viewBox="0 0 32 32"><path d="M2.5 17.7 H29.500" stroke="#79b0a2" stroke-width=".9"/><rect x="13" y="12.700" width="5" height="5" fill="#3f6a60"/><rect x="4" y="14.8" width="2.2" height=".8" fill="#9aa8a6"/><rect x="8.6" y="14.8" width="2.2" height=".8" fill="#9aa8a6"/><rect x="20.4" y="14.8" width="2.2" height=".8" fill="#9aa8a6"/><rect x="25" y="14.8" width="2.2" height=".8" fill="#9aa8a6"/></svg></div>
    <div class="tile" style="left:111px;top:32px"><svg width="32" height="32" viewBox="0 0 32 32"><rect x="2.4" y="5.5" width="25.7" height="3.6" fill="#4a4a4a"/><rect x="4" y="6.7" width="6.5" height="1.1" fill="#eee"/><rect x="2.4" y="9.45" width="25.7" height="3.6" fill="#4a4a4a"/><rect x="4" y="10.6" width="6.5" height="1.1" fill="#eee"/><rect x="2.4" y="13.4" width="25.7" height="3.6" fill="#6cc8b4"/><rect x="4" y="14.6" width="6.5" height="1.1" fill="#eee"/><rect x="2.4" y="17.35" width="25.7" height="3.6" fill="#4a4a4a"/><rect x="4" y="18.6" width="6.5" height="1.1" fill="#eee"/><rect x="2.4" y="21.3" width="25.7" height="3.6" fill="#4a4a4a"/><rect x="4" y="22.5" width="6.5" height="1.1" fill="#eee"/></svg></div>
  </div>
  <div class="liblabel" style="top:657.5px">BI navigation</div>
  <div class="tri-d" style="left:23px;top:688px"></div><div class="tree b" style="left:34.5px;top:682.5px;color:#3565ab">Templates</div>
</div>
<div id="leftborder"></div>
<div id="mid"></div>
<div id="midc" class="abs" style="left:0;top:0;width:329px;height:719px;overflow:hidden">
  <div class="abs" style="left:212px;top:117px;width:112px;height:1px;background:#a8a8a8"></div>
  <svg class="abs" style="left:212px;top:95px" width="34" height="20" viewBox="212 95 34 20">
    <path d="M221.6 100.2 L217 105 L221.6 109.8" fill="none" stroke="#8eaed6" stroke-width="1.9"/>
    <path d="M234.6 100.2 L239.2 105 L234.6 109.8" fill="none" stroke="#2a4f98" stroke-width="1.9"/>
  </svg>
  <div class="abs" style="left:246.800px;top:96.3px;width:69.2px;height:17.2px;border-radius:4px;background:#fff;box-shadow:0 0 0 .5px rgba(0,0,0,.2),0 1px 1px rgba(0,0,0,.2);overflow:hidden">
    <div class="abs" style="left:54.4px;top:0;width:15px;height:18px;background:linear-gradient(#6cb0fd,#1b72fb)"></div>
    <svg class="abs" style="left:54.4px;top:-0.4px" width="15" height="18" viewBox="0 0 15 18"><path d="M4.6 7 L7.5 4.2 L10.4 7 M4.6 11 L7.5 13.8 L10.4 11" fill="none" stroke="#fff" stroke-width="1.3" stroke-linecap="round" stroke-linejoin="round"/></svg>
    <div class="abs" style="left:7.6px;top:2.2px;font-size:11px;line-height:13px;color:#222;white-space:nowrap">BI charts</div>
  </div>
  <!--MIDSTART-->
  <div class="abs" style="left:233px;top:339px;width:70px;height:70px;border:4px solid #9dc4f6;border-radius:5px"></div>
  <svg class="abs" style="left:212px;top:118px" width="112" height="601" viewBox="212 118 112 601">
  <path d="M242.6 168 V197.8 H292" fill="none" stroke="#9a9a9a" stroke-width=".8"/><rect x="243.10" y="193.40" width="1.05" height="4.00" fill="#45c7b0" opacity="0.75"/><rect x="244.10" y="190.15" width="1.05" height="7.25" fill="#6f87c8" opacity="0.75"/><rect x="245.10" y="186.65" width="1.05" height="10.75" fill="#8b4fa3" opacity="0.8"/><rect x="246.10" y="184.90" width="1.05" height="12.50" fill="#c4267e" opacity="0.85"/><rect x="247.79" y="192.88" width="1.05" height="4.52" fill="#45c7b0" opacity="0.75"/><rect x="248.79" y="189.22" width="1.05" height="8.18" fill="#6f87c8" opacity="0.75"/><rect x="249.79" y="185.26" width="1.05" height="12.14" fill="#8b4fa3" opacity="0.8"/><rect x="250.79" y="183.29" width="1.05" height="14.11" fill="#c4267e" opacity="0.85"/><rect x="252.48" y="192.37" width="1.05" height="5.03" fill="#45c7b0" opacity="0.75"/><rect x="253.48" y="188.28" width="1.05" height="9.12" fill="#6f87c8" opacity="0.75"/><rect x="254.48" y="183.88" width="1.05" height="13.52" fill="#8b4fa3" opacity="0.8"/><rect x="255.48" y="181.68" width="1.05" height="15.72" fill="#c4267e" opacity="0.85"/><rect x="257.17" y="191.85" width="1.05" height="5.55" fill="#45c7b0" opacity="0.75"/><rect x="258.17" y="187.35" width="1.05" height="10.05" fill="#6f87c8" opacity="0.75"/><rect x="259.17" y="182.49" width="1.05" height="14.91" fill="#8b4fa3" opacity="0.8"/><rect x="260.17" y="180.07" width="1.05" height="17.33" fill="#c4267e" opacity="0.85"/><rect x="261.86" y="191.34" width="1.05" height="6.06" fill="#45c7b0" opacity="0.75"/><rect x="262.86" y="186.41" width="1.05" height="10.99" fill="#6f87c8" opacity="0.75"/><rect x="263.86" y="181.11" width="1.05" height="16.29" fill="#8b4fa3" opacity="0.8"/><rect x="264.86" y="178.46" width="1.05" height="18.94" fill="#c4267e" opacity="0.85"/><rect x="266.55" y="190.82" width="1.05" height="6.58" fill="#45c7b0" opacity="0.75"/><rect x="267.55" y="185.48" width="1.05" height="11.92" fill="#6f87c8" opacity="0.75"/><rect x="268.55" y="179.72" width="1.05" height="17.68" fill="#8b4fa3" opacity="0.8"/><rect x="269.55" y="176.84" width="1.05" height="20.56" fill="#c4267e" opacity="0.85"/><rect x="271.24" y="190.31" width="1.05" height="7.09" fill="#45c7b0" opacity="0.75"/><rect x="272.24" y="184.54" width="1.05" height="12.86" fill="#6f87c8" opacity="0.75"/><rect x="273.24" y="178.34" width="1.05" height="19.06" fill="#8b4fa3" opacity="0.8"/><rect x="274.24" y="175.23" width="1.05" height="22.17" fill="#c4267e" opacity="0.85"/><rect x="275.93" y="189.79" width="1.05" height="7.61" fill="#45c7b0" opacity="0.75"/><rect x="276.93" y="183.61" width="1.05" height="13.79" fill="#6f87c8" opacity="0.75"/><rect x="277.93" y="176.95" width="1.05" height="20.45" fill="#8b4fa3" opacity="0.8"/><rect x="278.93" y="173.62" width="1.05" height="23.78" fill="#c4267e" opacity="0.85"/><rect x="280.62" y="189.28" width="1.05" height="8.12" fill="#45c7b0" opacity="0.75"/><rect x="281.62" y="182.67" width="1.05" height="14.73" fill="#6f87c8" opacity="0.75"/><rect x="282.62" y="175.57" width="1.05" height="21.83" fill="#8b4fa3" opacity="0.8"/><rect x="283.62" y="172.01" width="1.05" height="25.39" fill="#c4267e" opacity="0.85"/><rect x="285.31" y="188.76" width="1.05" height="8.64" fill="#45c7b0" opacity="0.75"/><rect x="286.31" y="181.74" width="1.05" height="15.66" fill="#6f87c8" opacity="0.75"/><rect x="287.31" y="174.18" width="1.05" height="23.22" fill="#8b4fa3" opacity="0.8"/><rect x="288.31" y="170.40" width="1.05" height="27.00" fill="#c4267e" opacity="0.85"/><rect x="240.6" y="201.4" width="1.6" height="7.4" fill="#9a9a9a"/><rect x="242.2" y="201.8" width="2.8" height="2.2" fill="#45c7b0" opacity=".8"/><rect x="242.200" y="204" width="2.8" height="2.2" fill="#8b4fa3" opacity=".8"/><rect x="242.200" y="206.2" width="2.8" height="2.4" fill="#c4267e" opacity=".85"/>
  <rect x="237" y="260" width="22" height="1.2" fill="#d8d8d8"/><rect x="236.6" y="266.7" width="6.70" height="6.7" fill="#2fc9a4"/><rect x="243.3" y="266.7" width="9.60" height="6.7" fill="#2bdd7c"/><rect x="252.9" y="266.7" width="16.00" height="6.7" fill="#39b036"/><rect x="268.9" y="266.7" width="4.50" height="6.7" fill="#127b90"/><rect x="273.4" y="266.7" width="7.80" height="6.7" fill="#35a5c8"/><rect x="281.2" y="266.7" width="18.50" height="6.7" fill="#62c5e0"/><rect x="236.2" y="276" width="50.10" height="28.00" fill="#fff" stroke="#cfcfcf" stroke-width=".5"/><rect x="236.2" y="280.00" width="20.80" height="4" fill="#2fc9a4"/><rect x="237.70" y="281.50" width="10.40" height="1" fill="#fff" opacity=".8"/><path d="M257 280.00 H286.3" stroke="#cfcfcf" stroke-width=".5"/><rect x="236.2" y="284.00" width="20.80" height="4" fill="#2bdd7c"/><rect x="237.70" y="285.50" width="10.40" height="1" fill="#fff" opacity=".8"/><path d="M257 284.00 H286.3" stroke="#cfcfcf" stroke-width=".5"/><rect x="236.2" y="288.00" width="20.80" height="4" fill="#39b036"/><rect x="237.70" y="289.50" width="10.40" height="1" fill="#fff" opacity=".8"/><path d="M257 288.00 H286.3" stroke="#cfcfcf" stroke-width=".5"/><rect x="236.2" y="292.00" width="20.80" height="4" fill="#127b90"/><rect x="237.70" y="293.50" width="10.40" height="1" fill="#fff" opacity=".8"/><path d="M257 292.00 H286.3" stroke="#cfcfcf" stroke-width=".5"/><rect x="236.2" y="296.00" width="20.80" height="4" fill="#35a5c8"/><rect x="237.70" y="297.50" width="10.40" height="1" fill="#fff" opacity=".8"/><path d="M257 296.00 H286.3" stroke="#cfcfcf" stroke-width=".5"/><rect x="236.2" y="300.00" width="20.80" height="4" fill="#62c5e0"/><rect x="237.70" y="301.50" width="10.40" height="1" fill="#fff" opacity=".8"/><path d="M257 300.00 H286.3" stroke="#cfcfcf" stroke-width=".5"/><path d="M257 276 V304.00" stroke="#cfcfcf" stroke-width=".5"/><rect x="270.8" y="281.6" width="1.4" height=".9" fill="#e08080"/><rect x="270.8" y="285.6" width="1.4" height=".9" fill="#e08080"/><rect x="270.8" y="289.6" width="1.4" height=".9" fill="#e08080"/><rect x="270.8" y="293.6" width="1.4" height=".9" fill="#e08080"/><rect x="270.8" y="297.6" width="1.4" height=".9" fill="#e08080"/><rect x="270.8" y="301.6" width="1.4" height=".9" fill="#e08080"/>
  <rect x="262" y="343.6" width="14" height="1" fill="#e2e2e2"/><path d="M286.90 365.20 A18.4 18.4 0 0 0 285.20 357.47 L274.40 362.47 A6.5 6.5 0 0 1 275.00 365.20 Z" fill="#2fc9a4"/><path d="M285.20 357.47 A18.4 18.4 0 0 0 269.50 346.83 L268.85 358.71 A6.5 6.5 0 0 1 274.40 362.47 Z" fill="#2bdd7c"/><path d="M269.50 346.83 A18.4 18.4 0 0 0 252.73 374.69 L262.93 368.55 A6.5 6.5 0 0 1 268.85 358.71 Z" fill="#39b036"/><path d="M252.73 374.69 A18.4 18.4 0 0 0 269.50 383.57 L268.85 371.69 A6.5 6.5 0 0 1 262.93 368.55 Z" fill="#127b90"/><path d="M269.50 383.57 A18.4 18.4 0 0 0 285.20 372.93 L274.40 367.93 A6.5 6.5 0 0 1 268.85 371.69 Z" fill="#35a5c8"/><path d="M285.20 372.93 A18.4 18.4 0 0 0 286.90 365.20 L275.00 365.20 A6.5 6.5 0 0 1 274.40 367.93 Z" fill="#62c5e0"/><rect x="249.5" y="385.2" width="36.80" height="21.20" fill="#fff" stroke="#cfcfcf" stroke-width=".5"/><rect x="249.5" y="387.80" width="19.00" height="3.1" fill="#2fc9a4"/><rect x="251.00" y="388.85" width="9.50" height="1" fill="#fff" opacity=".8"/><path d="M268.5 387.80 H286.3" stroke="#cfcfcf" stroke-width=".5"/><rect x="249.5" y="390.90" width="19.00" height="3.1" fill="#2bdd7c"/><rect x="251.00" y="391.95" width="9.50" height="1" fill="#fff" opacity=".8"/><path d="M268.5 390.90 H286.3" stroke="#cfcfcf" stroke-width=".5"/><rect x="249.5" y="394.00" width="19.00" height="3.1" fill="#39b036"/><rect x="251.00" y="395.05" width="9.50" height="1" fill="#fff" opacity=".8"/><path d="M268.5 394.00 H286.3" stroke="#cfcfcf" stroke-width=".5"/><rect x="249.5" y="397.10" width="19.00" height="3.1" fill="#127b90"/><rect x="251.00" y="398.15" width="9.50" height="1" fill="#fff" opacity=".8"/><path d="M268.5 397.10 H286.3" stroke="#cfcfcf" stroke-width=".5"/><rect x="249.5" y="400.20" width="19.00" height="3.1" fill="#35a5c8"/><rect x="251.00" y="401.25" width="9.50" height="1" fill="#fff" opacity=".8"/><path d="M268.5 400.20 H286.3" stroke="#cfcfcf" stroke-width=".5"/><rect x="249.5" y="403.30" width="19.00" height="3.1" fill="#62c5e0"/><rect x="251.00" y="404.35" width="9.50" height="1" fill="#fff" opacity=".8"/><path d="M268.5 403.30 H286.3" stroke="#cfcfcf" stroke-width=".5"/><path d="M268.5 385.2 V406.40" stroke="#cfcfcf" stroke-width=".5"/><path d="M277.4 385.2 V406.4" stroke="#cfcfcf" stroke-width=".5"/>
  <path d="M241.8 447 V476.6 H290.8" fill="none" stroke="#8a8a8a" stroke-width=".8"/><rect x="242.5" y="463.3" width="1.6" height="1.4" fill="#c4267e" opacity=".85"/><rect x="242.5" y="465.7" width="1.6" height="1.4" fill="#c4267e" opacity=".85"/><rect x="242.5" y="468.3" width="1.6" height="1.4" fill="#8b4fa3" opacity=".85"/><rect x="242.5" y="471.3" width="1.6" height="1.4" fill="#45c7b0" opacity=".85"/><rect x="242.5" y="473.9" width="1.6" height="1.4" fill="#45c7b0" opacity=".85"/><rect x="251.4" y="460.7" width="1.6" height="1.4" fill="#c4267e" opacity=".85"/><rect x="251.4" y="462.7" width="1.6" height="1.4" fill="#c4267e" opacity=".85"/><rect x="251.4" y="465.3" width="1.6" height="1.4" fill="#8b4fa3" opacity=".85"/><rect x="251.4" y="467.9" width="1.6" height="1.4" fill="#6f87c8" opacity=".85"/><rect x="251.4" y="470.3" width="1.6" height="1.4" fill="#45c7b0" opacity=".85"/><rect x="260.3" y="453.9" width="1.6" height="1.4" fill="#6f87c8" opacity=".85"/><rect x="260.3" y="456.3" width="1.6" height="1.4" fill="#8b4fa3" opacity=".85"/><rect x="260.3" y="458.7" width="1.6" height="1.4" fill="#c4267e" opacity=".85"/><rect x="260.3" y="460.9" width="1.6" height="1.4" fill="#c4267e" opacity=".85"/><rect x="260.3" y="463.3" width="1.6" height="1.4" fill="#8b4fa3" opacity=".85"/><rect x="269.0" y="455.9" width="1.6" height="1.4" fill="#c4267e" opacity=".85"/><rect x="269.0" y="457.9" width="1.6" height="1.4" fill="#c4267e" opacity=".85"/><rect x="269.0" y="460.3" width="1.6" height="1.4" fill="#8b4fa3" opacity=".85"/><rect x="269.0" y="462.9" width="1.6" height="1.4" fill="#6f87c8" opacity=".85"/><rect x="269.0" y="465.3" width="1.6" height="1.4" fill="#45c7b0" opacity=".85"/><rect x="277.9" y="450.7" width="1.6" height="1.4" fill="#6f87c8" opacity=".85"/><rect x="277.9" y="452.9" width="1.6" height="1.4" fill="#c4267e" opacity=".85"/><rect x="277.9" y="455.1" width="1.6" height="1.4" fill="#c4267e" opacity=".85"/><rect x="277.9" y="457.7" width="1.6" height="1.4" fill="#8b4fa3" opacity=".85"/><rect x="277.9" y="462.5" width="1.6" height="1.4" fill="#45c7b0" opacity=".85"/><rect x="286.8" y="449.9" width="1.6" height="1.4" fill="#c4267e" opacity=".85"/><rect x="286.8" y="451.9" width="1.6" height="1.4" fill="#c4267e" opacity=".85"/><rect x="286.8" y="454.3" width="1.6" height="1.4" fill="#8b4fa3" opacity=".85"/><rect x="286.8" y="456.9" width="1.6" height="1.4" fill="#6f87c8" opacity=".85"/><rect x="286.8" y="459.3" width="1.6" height="1.4" fill="#45c7b0" opacity=".85"/><rect x="251.0" y="476" width="2.4" height="1.200" fill="#bbb"/><rect x="259.90000000000003" y="476" width="2.4" height="1.200" fill="#bbb"/><rect x="268.6" y="476" width="2.4" height="1.200" fill="#bbb"/><rect x="277.5" y="476" width="2.4" height="1.200" fill="#bbb"/><rect x="240.6" y="480.6" width="3.600" height="2.4" fill="#45c7b0"/><rect x="240.6" y="483" width="3.6" height="2.400" fill="#8b4fa3"/><rect x="240.6" y="485.4" width="3.6" height="2.6" fill="#c4267e"/>
  <path d="M242 543 V573.4 H291" fill="none" stroke="#9a9a9a" stroke-width=".8"/><path d="M243.1 573 V570.400 H250.3 V560 H257.8 V554.4 H265.3 V551.7 H272.7 V562.4 H279.7 V567.4 H287.2 V573 Z" fill="#8a4a9e"/><path d="M250.3 573 V570.4" stroke="#a06cb2" stroke-width=".35"/><path d="M257.8 573 V560" stroke="#a06cb2" stroke-width=".35"/><path d="M265.3 573 V554.4" stroke="#a06cb2" stroke-width=".35"/><path d="M272.7 573 V562.4" stroke="#a06cb2" stroke-width=".35"/><path d="M279.7 573 V567.4" stroke="#a06cb2" stroke-width=".35"/>
  <path d="M242.5 633.4 V662.700 H291" fill="none" stroke="#8a8a8a" stroke-width=".8"/><path d="M243 655.4 L252 653.6 L261 648 L270 643.4 L279.500 641.2" fill="none" stroke="#7f92cf" stroke-width="1.25"/><path d="M243 656.6 L252 656 L261 655.4 L270 654 L279 649.4 L289 647.8" fill="none" stroke="#d0508f" stroke-width="1.25"/><path d="M243 659.4 L252 658 L261 657 L270 656.400 L279 654.6 L289 651.6" fill="none" stroke="#9a5db0" stroke-width="1.25"/><path d="M243 662 L261 661.4 L279 660.400 L289 659.6" fill="none" stroke="#49c4b0" stroke-width="1.3"/><rect x="241" y="667" width="4" height="1.7" fill="#6f87c8"/><rect x="241" y="668.7" width="4" height="1.700" fill="#45c7b0"/><rect x="241" y="670.4" width="4" height="1.7" fill="#8b4fa3"/><rect x="241" y="672.100" width="4" height="1.7" fill="#c4267e"/>
  <path d="M262.8 719.4 Q267.4 715.600 272 719.4 Z" fill="#2bdd7c"/>
  </svg>
  <div class="mlabel" style="top:130.5px">Horizontal b ...</div>
  <div class="mlabel" style="top:223.9px">Column char ...</div>
  <div class="mlabel" style="top:317.1px">Divided ba ...</div>
  <div class="mlabel" style="top:409.7px;color:#2c3f9e">Donut chart</div>
  <div class="mlabel" style="top:502.8px">Dot plot (mu ...</div>
  <div class="mlabel" style="top:595.9px">Histogram</div>
  <div class="mlabel" style="top:688.9px">Line chart ( ...</div>
  <div class="chk" style="top:156px"><svg width="6" height="6" viewBox="0 0 6 6" style="position:absolute;left:0;top:0"><path d="M1 2.300 L2.500 3.700 L4.600 1.300" fill="none" stroke="#2f7ac0" stroke-width="1"/></svg></div>
  <div class="chk" style="top:249px"><svg width="6" height="6" viewBox="0 0 6 6" style="position:absolute;left:0;top:0"><path d="M1 2.300 L2.500 3.700 L4.600 1.300" fill="none" stroke="#2f7ac0" stroke-width="1"/></svg></div>
  <div class="chk" style="top:342px"><svg width="6" height="6" viewBox="0 0 6 6" style="position:absolute;left:0;top:0"><path d="M1 2.300 L2.500 3.700 L4.600 1.300" fill="none" stroke="#2f7ac0" stroke-width="1"/></svg></div>
  <div class="chk" style="top:435px"><svg width="6" height="6" viewBox="0 0 6 6" style="position:absolute;left:0;top:0"><path d="M1 2.300 L2.500 3.700 L4.600 1.300" fill="none" stroke="#2f7ac0" stroke-width="1"/></svg></div>
  <div class="chk" style="top:528px"><svg width="6" height="6" viewBox="0 0 6 6" style="position:absolute;left:0;top:0"><path d="M1 2.300 L2.500 3.700 L4.600 1.300" fill="none" stroke="#2f7ac0" stroke-width="1"/></svg></div>
  <div class="chk" style="top:621px"><svg width="6" height="6" viewBox="0 0 6 6" style="position:absolute;left:0;top:0"><path d="M1 2.300 L2.500 3.700 L4.600 1.300" fill="none" stroke="#2f7ac0" stroke-width="1"/></svg></div>
  <div class="chk" style="top:714px"><svg width="6" height="6" viewBox="0 0 6 6" style="position:absolute;left:0;top:0"><path d="M1 2.300 L2.500 3.700 L4.600 1.300" fill="none" stroke="#2f7ac0" stroke-width="1"/></svg></div>
  <!--MIDEND-->
</div>
<div id="split"></div>
<div id="splitline"></div>
<div id="canvas">
  <!--CSTART-->
  <svg class="abs" style="left:0;top:0" width="468" height="626" viewBox="329 93 468 626">
  <text x="558.4" y="198" text-anchor="middle" font-family="DejaVu Sans Condensed, DejaVu Sans, Liberation Sans, sans-serif" font-size="22" fill="#868686" stroke="#868686" stroke-width=".45">Donut chart</text>
  <path d="M711.85 361.30 A152.65 152.65 0 0 0 697.74 297.20 L614.24 335.83 A60.65 60.65 0 0 1 619.85 361.30 Z" fill="#26c9a3" stroke="#26c9a3" stroke-width=".5" stroke-linejoin="round"/>
  <path d="M697.74 297.20 A152.65 152.65 0 0 0 567.46 208.87 L562.48 300.74 A60.65 60.65 0 0 1 614.24 335.83 Z" fill="#28df7c" stroke="#28df7c" stroke-width=".5" stroke-linejoin="round"/>
  <path d="M567.46 208.87 A152.65 152.65 0 0 0 428.40 440.00 L507.23 392.57 A60.65 60.65 0 0 1 562.48 300.74 Z" fill="#37b034" stroke="#37b034" stroke-width=".5" stroke-linejoin="round"/>
  <path d="M428.40 440.00 A152.65 152.65 0 0 0 567.46 513.73 L562.48 421.86 A60.65 60.65 0 0 1 507.23 392.57 Z" fill="#117b90" stroke="#117b90" stroke-width=".5" stroke-linejoin="round"/>
  <path d="M567.46 513.73 A152.65 152.65 0 0 0 697.74 425.40 L614.24 386.77 A60.65 60.65 0 0 1 562.48 421.86 Z" fill="#34a5c8" stroke="#34a5c8" stroke-width=".5" stroke-linejoin="round"/>
  <path d="M697.74 425.40 A152.65 152.65 0 0 0 711.85 361.30 L619.85 361.30 A60.65 60.65 0 0 1 614.24 386.77 Z" fill="#62c5e0" stroke="#62c5e0" stroke-width=".5" stroke-linejoin="round"/>
  <text x="663.4" y="346.1" text-anchor="middle" font-family="DejaVu Sans Condensed, DejaVu Sans, Liberation Sans, sans-serif" font-size="15.8" fill="#2b2828">10</text>
  <text x="619.1" y="280.7" text-anchor="middle" font-family="DejaVu Sans Condensed, DejaVu Sans, Liberation Sans, sans-serif" font-size="15.8" fill="#2b2828">25</text>
  <text x="467.8" y="314.0" text-anchor="middle" font-family="DejaVu Sans Condensed, DejaVu Sans, Liberation Sans, sans-serif" font-size="15.8" fill="#2b2828">50</text>
  <text x="509.2" y="463.2" text-anchor="middle" font-family="DejaVu Sans Condensed, DejaVu Sans, Liberation Sans, sans-serif" font-size="15.8" fill="#2b2828">25</text>
  <text x="619.1" y="457.3" text-anchor="middle" font-family="DejaVu Sans Condensed, DejaVu Sans, Liberation Sans, sans-serif" font-size="15.8" fill="#2b2828">25</text>
  <text x="663.4" y="391.9" text-anchor="middle" font-family="DejaVu Sans Condensed, DejaVu Sans, Liberation Sans, sans-serif" font-size="15.8" fill="#2b2828">10</text>
  <rect x="406" y="538.5" width="306" height="168" fill="#fff"/>
  <rect x="405.5" y="562.5" width="160.0" height="24.5" fill="#26c9a3"/>
  <rect x="405.5" y="586.5" width="160.0" height="24.5" fill="#28df7c"/>
  <rect x="405.5" y="610.5" width="160.0" height="24.5" fill="#37b034"/>
  <rect x="405.5" y="634.5" width="160.0" height="24.5" fill="#117b90"/>
  <rect x="405.5" y="658.5" width="160.0" height="24.5" fill="#34a5c8"/>
  <rect x="405.5" y="682.5" width="160.0" height="24" fill="#62c5e0"/>
  <path d="M406 538.5 H712 M406 562.5 H712 M565.5 586.5 H712 M565.5 610.5 H712 M565.5 634.5 H712 M565.5 658.5 H712 M565.5 682.5 H712 M565.5 706.5 H712 M406 538.5 V562.5 M565.5 538.5 V706.5 M712 538.5 V706.5" fill="none" stroke="#c9c9c9" stroke-width="1"/>
  <text x="416.2" y="557.2" font-family="DejaVu Sans Condensed, DejaVu Sans, Liberation Sans, sans-serif" font-size="15.1" fill="#7a7a7a" stroke="#7a7a7a" stroke-width=".3">Categories caption</text>
  <text x="638.7" y="557.2" text-anchor="middle" font-family="DejaVu Sans Condensed, DejaVu Sans, Liberation Sans, sans-serif" font-size="15.2" fill="#747474" stroke="#747474" stroke-width=".3">Values, units</text>
  <text x="415.9" y="582.1" font-family="DejaVu Sans Condensed, DejaVu Sans, Liberation Sans, sans-serif" font-size="15" fill="#fff" stroke="#fff" stroke-width=".5">Category 1</text>
  <text x="638.7" y="582.1" text-anchor="middle" font-family="DejaVu Sans Condensed, DejaVu Sans, Liberation Sans, sans-serif" font-size="15" fill="#6e6e6e" stroke="#6e6e6e" stroke-width=".25">10</text>
  <text x="415.9" y="606.1" font-family="DejaVu Sans Condensed, DejaVu Sans, Liberation Sans, sans-serif" font-size="15" fill="#fff" stroke="#fff" stroke-width=".5">Category 2</text>
  <text x="638.7" y="606.1" text-anchor="middle" font-family="DejaVu Sans Condensed, DejaVu Sans, Liberation Sans, sans-serif" font-size="15" fill="#6e6e6e" stroke="#6e6e6e" stroke-width=".25">25</text>
  <text x="415.9" y="630.1" font-family="DejaVu Sans Condensed, DejaVu Sans, Liberation Sans, sans-serif" font-size="15" fill="#fff" stroke="#fff" stroke-width=".5">Category 3</text>
  <text x="638.7" y="630.1" text-anchor="middle" font-family="DejaVu Sans Condensed, DejaVu Sans, Liberation Sans, sans-serif" font-size="15" fill="#6e6e6e" stroke="#6e6e6e" stroke-width=".25">50</text>
  <text x="415.9" y="654.1" font-family="DejaVu Sans Condensed, DejaVu Sans, Liberation Sans, sans-serif" font-size="15" fill="#fff" stroke="#fff" stroke-width=".5">Category 4</text>
  <text x="638.7" y="654.1" text-anchor="middle" font-family="DejaVu Sans Condensed, DejaVu Sans, Liberation Sans, sans-serif" font-size="15" fill="#6e6e6e" stroke="#6e6e6e" stroke-width=".25">25</text>
  <text x="415.9" y="678.1" font-family="DejaVu Sans Condensed, DejaVu Sans, Liberation Sans, sans-serif" font-size="15" fill="#fff" stroke="#fff" stroke-width=".5">Category 5</text>
  <text x="638.7" y="678.1" text-anchor="middle" font-family="DejaVu Sans Condensed, DejaVu Sans, Liberation Sans, sans-serif" font-size="15" fill="#6e6e6e" stroke="#6e6e6e" stroke-width=".25">25</text>
  <text x="415.9" y="702.1" font-family="DejaVu Sans Condensed, DejaVu Sans, Liberation Sans, sans-serif" font-size="15" fill="#fff" stroke="#fff" stroke-width=".5">Category 6</text>
  <text x="638.7" y="702.1" text-anchor="middle" font-family="DejaVu Sans Condensed, DejaVu Sans, Liberation Sans, sans-serif" font-size="15" fill="#6e6e6e" stroke="#6e6e6e" stroke-width=".25">10</text>
  <rect x="405" y="207.5" width="308" height="308" stroke="#3bc043" stroke-width="1.1" stroke-dasharray="5 5" stroke-dashoffset="0.6" fill="none"/>
  <circle cx="401.6" cy="202.4" r="6.4" fill="#3bc043"/><rect x="401.6" y="202.4" width="6.4" height="6.4" fill="#3bc043"/>
  <circle cx="719.3" cy="202.4" r="6.4" fill="#3bc043"/><rect x="712.9" y="202.4" width="6.4" height="6.4" fill="#3bc043"/>
  <circle cx="401.6" cy="520.4" r="6.4" fill="#3bc043"/><rect x="401.6" y="514" width="6.4" height="6.4" fill="#3bc043"/>
  <circle cx="719.3" cy="520.4" r="6.4" fill="#3bc043"/><rect x="712.9" y="514" width="6.4" height="6.4" fill="#3bc043"/>
  <circle cx="560.50" cy="199.40" r="6.35" fill="#3bc043"/><path d="M560.5 208.3 L556.05 203.93 L564.95 203.93 Z" fill="#3bc043"/>
  <circle cx="560.50" cy="522.60" r="6.35" fill="#3bc043"/><path d="M560.5 513.7 L564.95 518.07 L556.05 518.07 Z" fill="#3bc043"/>
  <circle cx="399.10" cy="361.30" r="6.35" fill="#3bc043"/><path d="M408 361.3 L403.63 365.75 L403.63 356.85 Z" fill="#3bc043"/>
  <circle cx="721.60" cy="361.30" r="6.35" fill="#3bc043"/><path d="M712.7 361.3 L717.07 356.85 L717.07 365.75 Z" fill="#3bc043"/>
  <path d="M559.2 163.6 A5 5 0 1 1 564.6 157.6" fill="none" stroke="#3bc043" stroke-width="1.4"/><path d="M562.2 157.2 L566.6 156.4 L565.2 160.8 Z" fill="#3bc043"/>
  <path d="M560 180.2 L565.6 186.2 L560 192 L554.4 186.2 Z" fill="#fbbc3a" stroke="#b8b8b8" stroke-width=".5"/><circle cx="560" cy="186.300" r="5.2" fill="#fbbc3a"/>
  <text x="560" y="189.600" text-anchor="middle" font-family="Liberation Serif, serif" font-size="9" fill="#5a3d00">T</text>
  <path d="M620.8 355.1 L627.0 361.3 L620.8 367.5 L614.5999999999999 361.3 Z" fill="#fbbc3a" stroke="#8a8a8a" stroke-width=".5" stroke-linejoin="round"/><circle cx="620.8" cy="361.3" r="5.3" fill="#fbbc3a"/>
  <path d="M406.5 556.0999999999999 L412.7 562.3 L406.5 568.5 L400.3 562.3 Z" fill="#fbbc3a" stroke="#8a8a8a" stroke-width=".5" stroke-linejoin="round"/><circle cx="406.5" cy="562.3" r="5.3" fill="#fbbc3a"/>
  </svg>
  <div class="abs" style="left:406.9px;top:64.3px;width:40.2px;height:40.2px;border-radius:50%;background:#2f95ee;box-shadow:0 -2.5px 8px rgba(0,0,0,.4)"></div>
  <svg class="abs" style="left:417px;top:74px" width="20" height="20" viewBox="746 167 20 20"><path d="M749 177.55 H763 M755.95 170.4 V184.800" stroke="#fff" stroke-width="2.3" fill="none"/></svg>
  <!--CEND-->
</div>
</body>
</html>
